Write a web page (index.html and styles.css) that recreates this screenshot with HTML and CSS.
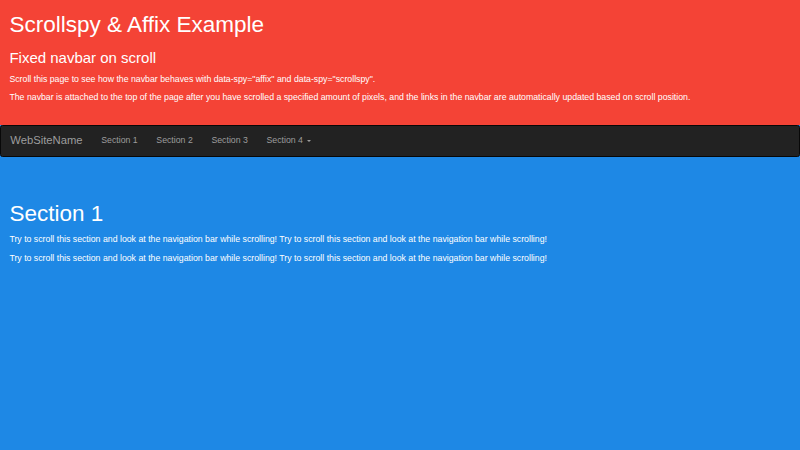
FILE: index.html
```
<!DOCTYPE html>
<html lang="en">
<head>
<meta charset="utf-8">
<title>Scrollspy &amp; Affix Example</title>
<link rel="stylesheet" href="styles.css">
</head>
<body>
<div class="header">
  <h1>Scrollspy &amp; Affix Example</h1>
  <h3>Fixed navbar on scroll</h3>
  <p>Scroll this page to see how the navbar behaves with data-spy="affix" and data-spy="scrollspy".</p>
  <p>The navbar is attached to the top of the page after you have scrolled a specified amount of pixels, and the links in the navbar are automatically updated based on scroll position.</p>
</div>
<nav class="navbar">
  <a class="brand" href="#">WebSiteName</a>
  <ul class="nav">
    <li><a href="#section1">Section 1</a></li>
    <li><a href="#section2">Section 2</a></li>
    <li><a href="#section3">Section 3</a></li>
    <li><a href="#section4">Section 4 <span class="caret"></span></a></li>
  </ul>
</nav>
<div class="section" id="section1">
  <h1>Section 1</h1>
  <p>Try to scroll this section and look at the navigation bar while scrolling! Try to scroll this section and look at the navigation bar while scrolling!</p>
  <p>Try to scroll this section and look at the navigation bar while scrolling! Try to scroll this section and look at the navigation bar while scrolling!</p>
</div>
</body>
</html>
```

FILE: styles.css
```
html, body {
  margin: 0;
  padding: 0;
}
body {
  font-family: "Liberation Sans", Arial, Helvetica, sans-serif;
  font-size: 8.75px;
  line-height: 1.42857;
  color: #333;
  background: #1E88E5;
}
h1, h3 {
  font-weight: normal;
  line-height: 1.1;
}
h1 {
  font-size: 22.5px;
  margin: 12.5px 0 6.25px;
}
h3 {
  font-size: 15px;
  margin: 12.5px 0 6.25px;
}
p {
  margin: 0 0 6.25px;
}
.header {
  display: flow-root;
  background: #F44336;
  color: #fff;
  height: 124.5px;
  box-sizing: border-box;
  padding: 0 9.4px;
}
.navbar {
  display: flex;
  background: #222;
  border: 1px solid #080808;
  border-radius: 2.5px;
  min-height: 30.2px;
}
.brand {
  display: block;
  box-sizing: border-box;
  height: 30.2px;
  padding: 8.85px 9.3px;
  font-size: 11.25px;
  line-height: 12.5px;
  color: #9d9d9d;
  text-decoration: none;
}
.nav {
  display: flex;
  list-style: none;
  margin: 0;
  padding: 0;
}
.nav a {
  display: block;
  padding: 8.85px 9.3px;
  line-height: 12.5px;
  color: #9d9d9d;
  text-decoration: none;
}
.caret {
  display: inline-block;
  width: 0;
  height: 0;
  margin-left: 1.25px;
  vertical-align: middle;
  border-top: 2.5px solid;
  border-right: 2.5px solid transparent;
  border-left: 2.5px solid transparent;
}
.section {
  display: flow-root;
  background: #1E88E5;
  color: #fff;
  padding: 33px 9.4px 0;
  min-height: 280px;
}
```
